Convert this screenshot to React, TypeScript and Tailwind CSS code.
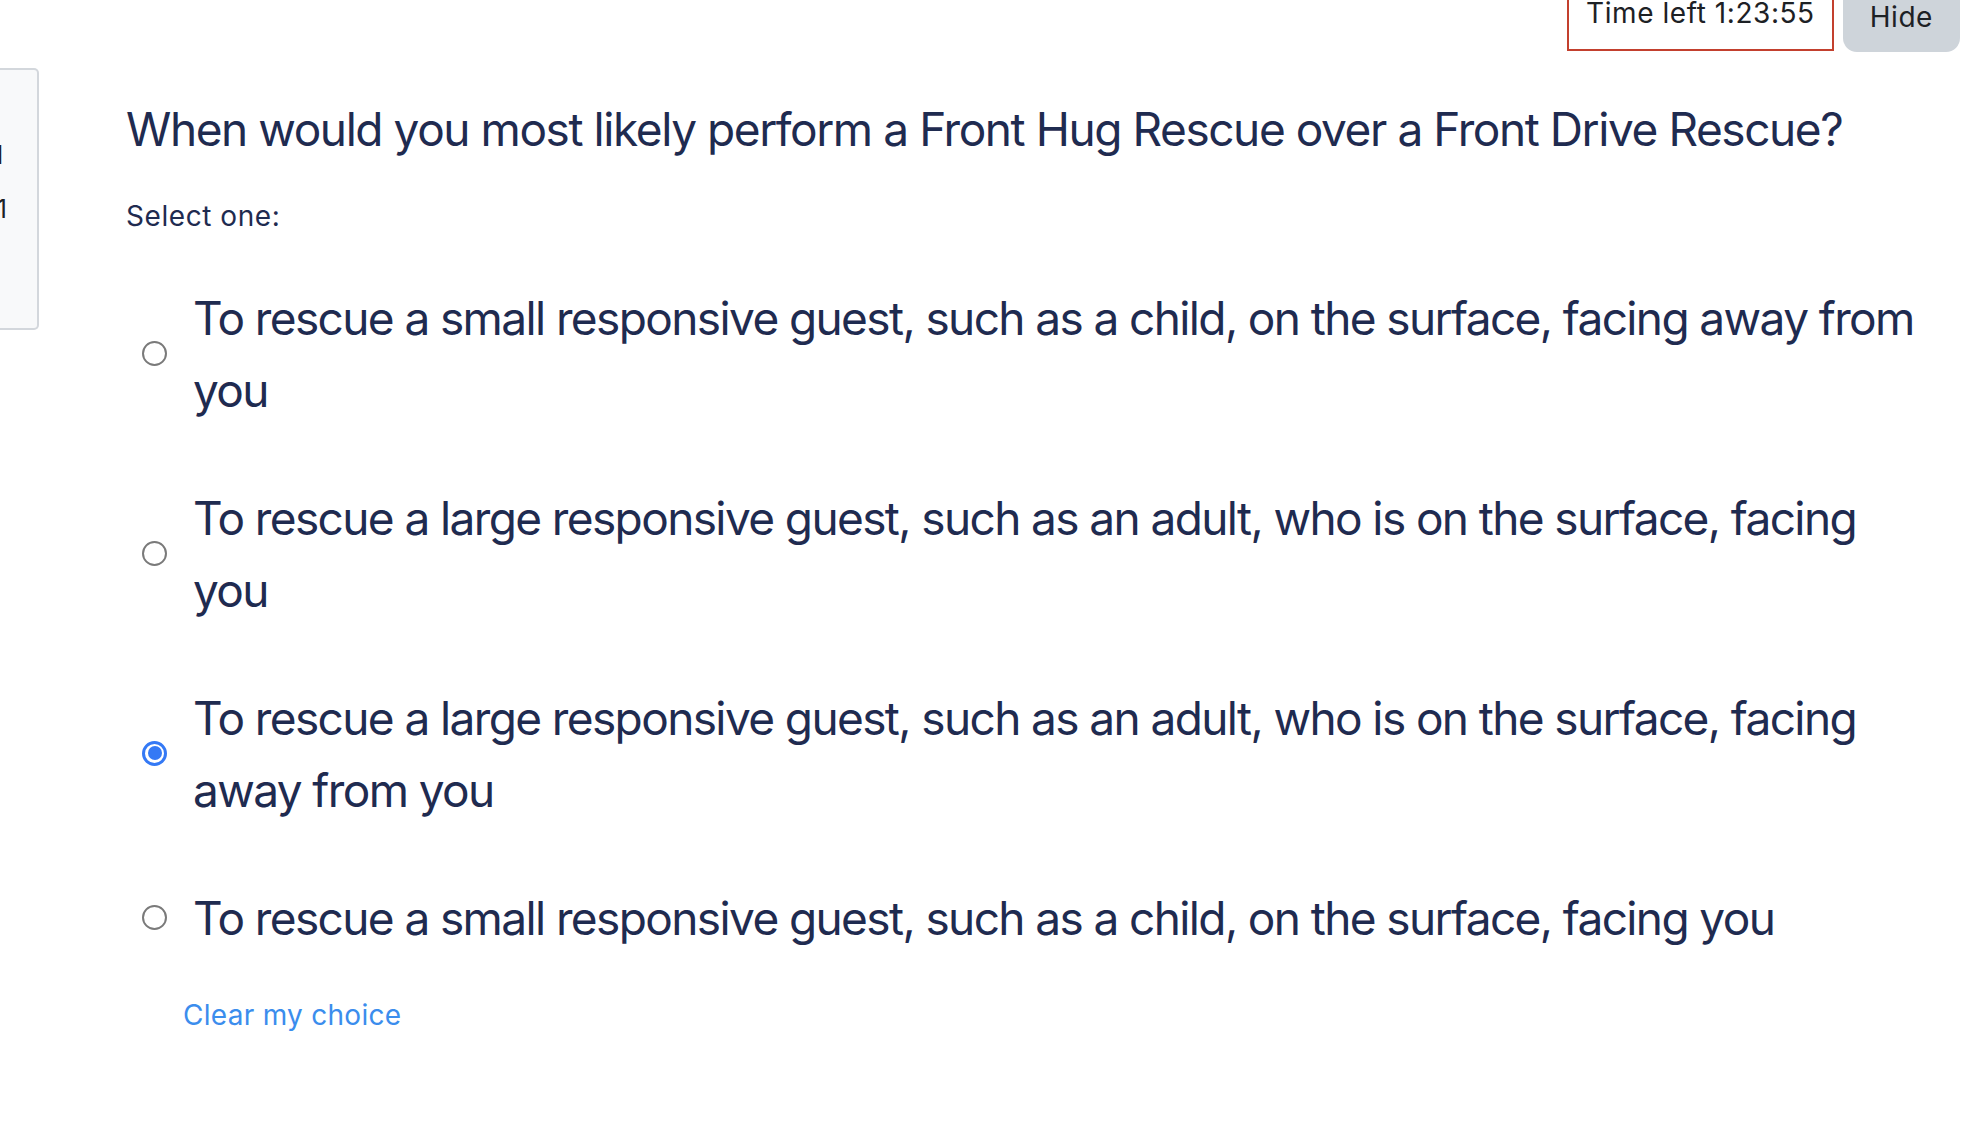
import React from "react";

function Radio({ checked }: { checked?: boolean }) {
  if (checked) {
    return (
      <div className="w-[25px] h-[25px] shrink-0 rounded-full border-[3px] border-[#3479f5] bg-white flex items-center justify-center">
        <div className="w-[14px] h-[14px] rounded-full bg-[#3479f5]" />
      </div>
    );
  }
  return <div className="w-[25px] h-[25px] shrink-0 rounded-full border-2 border-[#7a7a7a] bg-white" />;
}

function Option({ lines, checked, last }: { lines: string[]; checked?: boolean; last?: boolean }) {
  return (
    <div className={"flex items-center pl-[16px] " + (last ? "" : "mb-[56px]")}>
      <div className="-mt-[2px]">
        <Radio checked={checked} />
      </div>
      <div className="ml-[26px] text-[46px] leading-[72px] tracking-[-0.035em] text-[#1f2b50]">
        {lines.map((l, i) => (
          <div key={i} className="whitespace-nowrap">
            {l}
          </div>
        ))}
      </div>
    </div>
  );
}

export default function App() {
  return (
    <div className="w-[1980px] h-[1122px] bg-white overflow-hidden font-[Inter,sans-serif] antialiased">
      {/* top bar: timer + hide */}
      <div className="flex justify-end items-start h-[52px] pr-[20px] gap-[9px]">
        <div className="-mt-[10px] h-[61px] border-2 border-[#c3402e] px-[17px] text-[28px] leading-[42px] tracking-[0.02em] text-[#1d2125] whitespace-nowrap">
          Time left 1:23:55
        </div>
        <div className="-mt-[10px] h-[62px] rounded-b-[14px] bg-[#ced4da] px-[27px] pt-[6px] text-[28px] leading-[42px] tracking-[0.02em] text-[#1d2125]">
          Hide
        </div>
      </div>

      <div className="flex">
        {/* peeking drawer */}
        <div className="w-[39px] shrink-0 mt-[16px]">
          <div className="h-[262px] bg-[#f8f9fa] border-2 border-l-0 border-[#d3d7dc] rounded-r-[5px] overflow-hidden flex flex-col items-start pt-[64px] text-[25px] leading-[42px] text-[#1d2125]">
            <div className="w-[3px] overflow-hidden flex justify-end">
              <div className="whitespace-nowrap">Started</div>
            </div>
            <div className="w-[7px] mt-[12px] overflow-hidden flex justify-end">
              <div className="whitespace-nowrap">Question 1</div>
            </div>
          </div>
        </div>

        {/* question content */}
        <div className="ml-[87px] pr-[55px] flex-1">
          <div className="mt-[48px] text-[46px] leading-[58px] tracking-[-0.031em] text-[#1f2b50] whitespace-nowrap">
            When would you most likely perform a Front Hug Rescue over a Front Drive Rescue?
          </div>
          <div className="mt-[37px] text-[28px] leading-[42px] tracking-[0.02em] text-[#1f2b50]">Select one:</div>
          <div className="mt-[45px]">
            <Option lines={["To rescue a small responsive guest, such as a child, on the surface, facing away from", "you"]} />
            <Option lines={["To rescue a large responsive guest, such as an adult, who is on the surface, facing", "you"]} />
            <Option checked lines={["To rescue a large responsive guest, such as an adult, who is on the surface, facing", "away from you"]} />
            <Option last lines={["To rescue a small responsive guest, such as a child, on the surface, facing you"]} />
          </div>
          <div className="mt-[40px] ml-[57px] text-[28px] leading-[42px] tracking-[0.01em] text-[#3b8ded]">Clear my choice</div>
        </div>
      </div>
    </div>
  );
}
